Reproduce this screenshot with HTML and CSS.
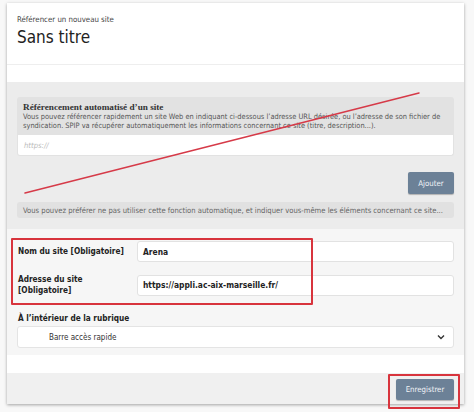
FILE: index.html
```html
<!DOCTYPE html>
<html lang="fr">
<head>
<meta charset="utf-8">
<title>Sans titre</title>
<link rel="stylesheet" href="styles.css">
</head>
<body>
<div class="card">
  <div class="head">
    <div class="kicker">Référencer un nouveau site</div>
    <h1 class="title">Sans titre</h1>
  </div>
  <div class="strip"></div>
  <div class="auto">
    <div class="autobox">
      <div class="autohead">
        <div class="autotitle">Référencement automatisé d’un site</div>
        <p class="autotext">Vous pouvez référencer rapidement un site Web en indiquant ci-dessous l’adresse URL désirée, ou l’adresse de son fichier de syndication. SPIP va récupérer automatiquement les informations concernant ce site (titre, description...).</p>
      </div>
      <div class="input placeholder">https://</div>
    </div>
    <div class="actions"><span class="btn">Ajouter</span></div>
    <div class="notice">Vous pouvez préférer ne pas utiliser cette fonction automatique, et indiquer vous-même les éléments concernant ce site...</div>
  </div>
  <div class="fields">
    <div class="row">
      <div class="label">Nom du site [Obligatoire]</div>
      <div class="input value">Arena</div>
    </div>
    <div class="row">
      <div class="label">Adresse du site<br>[Obligatoire]</div>
      <div class="input value">https://appli.ac-aix-marseille.fr/</div>
    </div>
    <div class="col">
      <div class="label">À l’intérieur de la rubrique</div>
      <div class="select">
        <span class="select-text">Barre accès rapide</span>
        <svg class="chev" width="8" height="6" viewBox="0 0 8 6"><path d="M1 1.5 L4 4.5 L7 1.5" fill="none" stroke="#333" stroke-width="1.4"/></svg>
      </div>
    </div>
  </div>
  <div class="strip2"></div>
  <div class="foot"><span class="btn">Enregistrer</span></div>
</div>
<div class="mark mark-fields"></div>
<div class="mark mark-save"></div>
<svg class="strike" width="474" height="412" viewBox="0 0 474 412"><line x1="419" y1="93" x2="25" y2="193" stroke="#d63a48" stroke-width="1.5" stroke-linecap="round"/></svg>
</body>
</html>
```

FILE: styles.css
```css
html, body {
  margin: 0;
  padding: 0;
}
body {
  background: #f8f8f8;
  width: 474px;
  height: 412px;
  overflow: hidden;
  position: relative;
  font-family: "DejaVu Sans Condensed", "DejaVu Sans", sans-serif;
  color: #333;
}
.card {
  margin: 3px 0 0 7px;
  width: 457px;
  background: #fff;
  box-shadow: 0 1px 3px rgba(0,0,0,0.35);
}
.head {
  height: 62px;
  box-sizing: border-box;
  padding: 12px 10px 0 10px;
  border-bottom: 1px solid #eeeeee;
}
.kicker {
  font-size: 7.8px;
  line-height: 10px;
  color: #444;
}
.title {
  margin: 2px 0 0 0;
  font-weight: normal;
  font-size: 17px;
  line-height: 20px;
  color: #222;
}
.strip {
  height: 17px;
  background: #fff;
}
.auto {
  background: #ececec;
  padding: 15px 10px 11px 10px;
}
.autohead {
  background: #e2e2e2;
  padding: 5px 6px 3px 6px;
  height: 38px;
  box-sizing: border-box;
  border-radius: 3px 3px 0 0;
}
.autotitle {
  font-family: "Liberation Serif", serif;
  font-weight: bold;
  font-size: 9.2px;
  line-height: 10px;
  color: #333;
}
.autotext {
  margin: 0;
  font-size: 7.4px;
  line-height: 9px;
  color: #555;
}
.input {
  height: 21px;
  box-sizing: border-box;
  background: #fff;
  border: 1px solid #e2e2e2;
  border-radius: 3px;
  display: flex;
  align-items: center;
  padding: 0 6px;
  font-size: 7.6px;
}
.autobox .input {
  border-radius: 0 0 3px 3px;
  border-top: none;
}
.placeholder {
  color: #bbb;
  font-style: italic;
}
.actions {
  display: flex;
  justify-content: flex-end;
  margin-top: 16px;
}
.btn {
  display: inline-flex;
  align-items: center;
  justify-content: center;
  background: #6c8197;
  color: #f2f4f7;
  font-size: 7.8px;
  border-radius: 2px;
  height: 22px;
  box-shadow: 0 1px 1px rgba(0,0,0,0.25);
}
.actions .btn {
  width: 46px;
}
.notice {
  margin-top: 8px;
  height: 16px;
  box-sizing: border-box;
  background: #e1e1e1;
  border-radius: 3px;
  padding: 0 6px;
  display: flex;
  align-items: center;
  font-size: 7.6px;
  color: #666;
}
.fields {
  background: #f6f6f6;
  padding: 12px 10px 7px 10px;
}
.row {
  display: grid;
  grid-template-columns: 120px 1fr;
  align-items: center;
  margin-bottom: 12px;
}
.row + .row {
  margin-bottom: 0;
}
.label {
  font-weight: bold;
  font-size: 8.2px;
  line-height: 11px;
  color: #222;
  padding-left: 1px;
}
.row .input {
  font-weight: bold;
  font-size: 8.4px;
  color: #222;
  padding-left: 5px;
}
.row + .row .input {
  height: 21px;
}
.col {
  margin-top: 17px;
}
.col .label {
  margin-bottom: 2px;
}
.select {
  height: 22px;
  box-sizing: border-box;
  background: #fff;
  border: 1px solid #e4e4e4;
  border-radius: 3px;
  display: flex;
  align-items: center;
  justify-content: space-between;
  padding: 0 8px 0 31px;
  font-size: 8px;
  color: #333;
}
.strip2 {
  height: 18px;
  background: #fff;
}
.foot {
  background: #f0f0f0;
  height: 31px;
  display: flex;
  justify-content: flex-end;
  align-items: center;
  padding-right: 10px;
}
.foot .btn {
  width: 58px;
  height: 21px;
  margin-top: 6px;
  align-self: flex-start;
}
.mark {
  position: absolute;
  border: 2px solid #d8343d;
  box-sizing: border-box;
  border-radius: 1px;
}
.mark-fields {
  left: 11px;
  top: 238px;
  width: 302px;
  height: 67px;
}
.mark-save {
  left: 388px;
  top: 374px;
  width: 72px;
  height: 35px;
}
.strike {
  position: absolute;
  left: 0;
  top: 0;
  pointer-events: none;
}
```
